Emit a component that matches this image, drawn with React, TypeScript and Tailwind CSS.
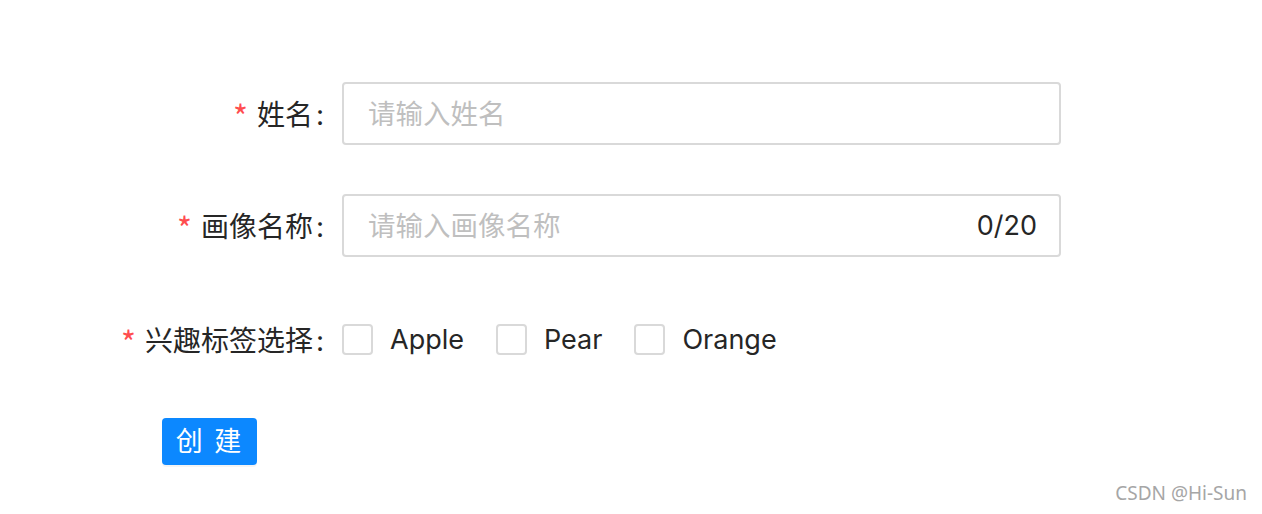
import React from 'react'

const FONT = '"Inter", "Noto Sans CJK SC", sans-serif'

function Label({ text }: { text: string }) {
  return (
    <div className="flex w-[342px] shrink-0 items-center justify-end pr-[14px] pt-[2px] text-[28px] text-[#262626]">
      <span className="mr-[9px] text-[32px] leading-none text-[#ff4d4f]" style={{ fontFamily: '"Noto Sans CJK SC", sans-serif' }}>
        *
      </span>
      <span>{text}</span>
      <span className="ml-[3px] mr-[4px]">:</span>
    </div>
  )
}

const TAGS = ['Apple', 'Pear', 'Orange']

export default function App() {
  return (
    <div className="relative h-[514px] w-[1262px] bg-white" style={{ fontFamily: FONT }}>
      <div className="flex flex-col pt-[82px]">
        <div className="flex items-center">
          <Label text="姓名" />
          <div className="flex h-[63px] w-[719px] items-center rounded-[4px] border-2 border-[#d9d9d9] px-[24px] pt-[2px] text-[27.5px] text-[#bfbfbf]">
            请输入姓名
          </div>
        </div>

        <div className="mt-[49px] flex items-center">
          <Label text="画像名称" />
          <div className="flex h-[63px] w-[719px] items-center justify-between rounded-[4px] border-2 border-[#d9d9d9] pl-[24px] pr-[22px] pt-[2px] text-[27.5px]">
            <span className="text-[#bfbfbf]">请输入画像名称</span>
            <span className="text-[27px] text-[#262626]">0/20</span>
          </div>
        </div>

        <div className="mt-[51px] flex h-[63px] items-center">
          <Label text="兴趣标签选择" />
          <div className="flex items-center">
            {TAGS.map((t) => (
              <label key={t} className="mr-[32px] flex items-center">
                <span className="h-[31px] w-[31px] rounded-[4px] border-2 border-[#d9d9d9] bg-white" />
                <span className="ml-[17px] pt-[2px] text-[27px] text-[#262626]">{t}</span>
              </label>
            ))}
          </div>
        </div>

        <div className="mt-[47px] pl-[162px]">
          <button className="flex h-[47px] w-[95px] items-center justify-center rounded-[4px] bg-[#0c88ff] pt-[2px] text-[27px] tracking-[2px] text-white shadow-[0_2px_0_rgba(0,0,0,0.045)]">
            创 建
          </button>
        </div>
      </div>

      <div
        className="absolute bottom-[7px] right-[15px] text-[19px] text-[#a6a6a6]"
        style={{ fontFamily: '"Noto Sans", sans-serif' }}
      >
        CSDN @Hi-Sun
      </div>
    </div>
  )
}
